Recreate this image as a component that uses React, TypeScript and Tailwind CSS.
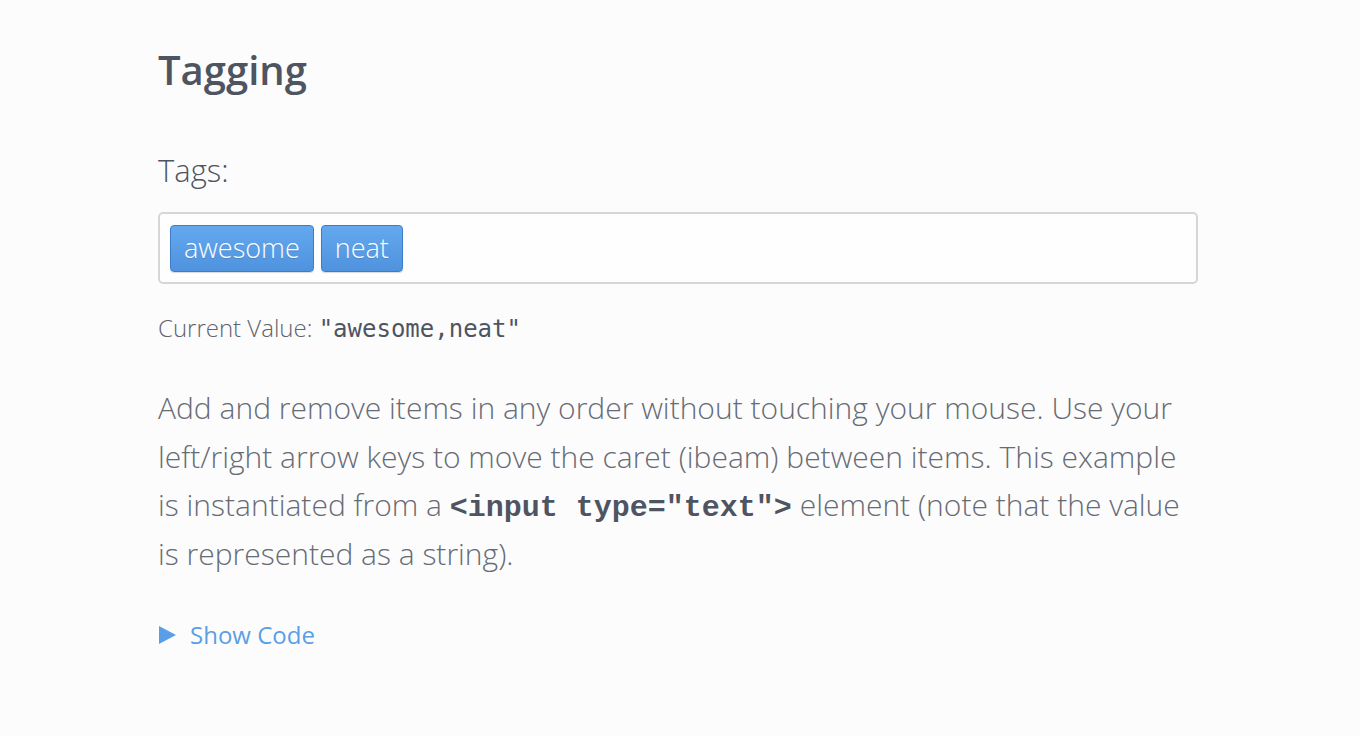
import React from 'react'

const tags = ['awesome', 'neat']

const Tag = ({ label }: { label: string }) => (
  <span className="flex h-[47px] items-center rounded-[4px] border border-[#3b7dc9] bg-gradient-to-b from-[#64a8ee] to-[#4f93df] px-[13px] text-[27px] font-light text-white [text-shadow:0_1px_0_rgba(0,0,0,0.15)] shadow-[0_1px_1px_rgba(0,0,0,0.15)]">
    {label}
  </span>
)

export default function App() {
  return (
    <div className="min-h-[736px] w-full bg-[#fcfcfd] font-['Open_Sans',sans-serif] text-[#4f5461]">
      <div className="ml-[158px] w-[1040px] pt-[42px]">
        <h1 className="text-[40px] font-semibold leading-[56px] text-[#4f5461]">Tagging</h1>

        <label className="mt-[53px] block text-[31px] font-light leading-[38px] text-[#4f5461]">Tags:</label>

        <div className="mt-[23px] flex h-[72px] items-center gap-[7px] rounded-[5px] border-2 border-[#d6d6d8] bg-[#fefefe] px-[10px]">
          {tags.map((t) => (
            <Tag key={t} label={t} />
          ))}
        </div>

        <p className="mt-[28px] text-[24px] font-light leading-[32px] text-[#5f636c]">
          Current Value:{' '}
          <span className="font-['DejaVu_Sans_Mono',monospace] text-[24px] font-normal text-[#4f5461]">"awesome,neat"</span>
        </p>

        <p className="mt-[39px] w-[1040px] text-[30px] font-light leading-[48.5px] text-[#676b74]">
          Add and remove items in any order without touching your mouse. Use your left/right arrow keys to move the caret
          (ibeam) between items. This example is instantiated from a{' '}
          <code className="font-['Liberation_Mono',monospace] text-[30px] font-bold leading-none text-[#4f5461]">&lt;input type="text"&gt;</code>{' '}
          element (note that the value is represented as a string).
        </p>

        <button className="mt-[39px] flex items-center gap-[14px] text-[24px] font-normal text-[#5a9fe5]">
          <svg width="17" height="18" viewBox="0 0 17 18" className="ml-[1px]">
            <path d="M0 0 L17 9 L0 18 Z" fill="#5a9fe5" />
          </svg>
          Show Code
        </button>
      </div>
    </div>
  )
}
